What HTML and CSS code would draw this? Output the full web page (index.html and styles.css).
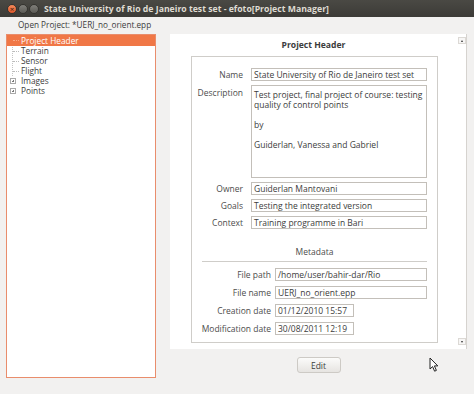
FILE: index.html
```html
<!DOCTYPE html>
<html lang="en">
<head>
<meta charset="UTF-8" />
<title>efoto[Project Manager]</title>
<link rel="stylesheet" href="styles.css">
</head>
<body>
<div class="window">
  <div class="titlebar">
    <span class="wbtn close">&#215;</span>
    <span class="wbtn"></span>
    <span class="wbtn"></span>
    <span class="title">State University of Rio de Janeiro test set - efoto[Project Manager]</span>
  </div>
  <div class="menubar">Open Project: *UERJ_no_orient.epp</div>

  <div class="main">
    <ul class="tree">
      <li class="selected">Project Header</li>
      <li>Terrain</li>
      <li>Sensor</li>
      <li>Flight</li>
      <li class="branch"><span class="expander"></span>Images</li>
      <li class="branch"><span class="expander"></span>Points</li>
    </ul>

    <div class="right">
      <div class="scroll">
        <div class="content">
          <div class="heading">Project Header</div>
          <div class="group">
            <div class="form top">
              <label>Name</label>
              <div class="field">State University of Rio de Janeiro test set</div>
              <label class="top-label">Description</label>
              <div class="field area">Test project, final project of course: testing
quality of control points

by

Guiderlan, Vanessa and Gabriel</div>
              <label>Owner</label>
              <div class="field">Guiderlan Mantovani</div>
              <label>Goals</label>
              <div class="field">Testing the integrated version</div>
              <label>Context</label>
              <div class="field">Training programme in Bari</div>
            </div>

            <div class="subtitle">Metadata</div>

            <div class="form meta">
              <label>File path</label>
              <div class="field">/home/user/bahir-dar/Rio</div>
              <label>File name</label>
              <div class="field">UERJ_no_orient.epp</div>
              <label>Creation date</label>
              <div class="field short">01/12/2010 15:57</div>
              <label>Modification date</label>
              <div class="field short">30/08/2011 12:19</div>
            </div>
          </div>
        </div>
        <div class="vscroll">
          <span class="arrow up"></span>
          <span class="arrow down"></span>
        </div>
      </div>
      <div class="actions">
        <button>Edit</button>
      </div>
    </div>
  </div>

  <svg class="cursor" width="10" height="16" viewBox="0 0 10 16">
    <path d="M1 1 L1 12 L3.6 9.6 L5.6 14.2 L7.4 13.4 L5.4 8.9 L8.8 8.9 Z" fill="#fff" stroke="#222" stroke-width="1" stroke-linejoin="round"/>
  </svg>
</div>
</body>
</html>
```

FILE: styles.css
```css
* { box-sizing: border-box; }
body { margin: 0; font-family: "Open Sans", "DejaVu Sans", sans-serif; font-size: 8.5px; color: #3c3c3c; background: #f2f1f0; }

.window { position: relative; width: 474px; height: 397px; background: #f2f1f0; border-bottom: 3px solid #fff; }

.titlebar { height: 17px; display: flex; align-items: center; padding-left: 7px; background: linear-gradient(#4a4944, #3c3b37); color: #dfdbd2; }
.wbtn { width: 10px; height: 10px; border-radius: 50%; margin-right: 1px; background: linear-gradient(#7f7e79, #5c5b56); border: 1px solid #353430; font-size: 8px; line-height: 8px; text-align: center; color: #3c1a0c; }
.wbtn.close { background: linear-gradient(#f58a5a, #e0572a); }
.title { margin-left: 4px; font-weight: bold; font-size: 8.7px; color: #dfdbd2; white-space: nowrap; }

.menubar { height: 17px; line-height: 16px; padding-left: 18px; font-size: 8.2px; color: #3c3c3c; }

.main { display: flex; padding-left: 6px; gap: 14px; }

.tree { position: relative; list-style: none; margin: 0; padding: 0; width: 150px; height: 344px; background: #fff; border: 1px solid #e98d6c; }
.tree::before { content: ""; position: absolute; left: 5px; top: 10px; height: 31px; border-left: 1px dotted #c4c4c4; }
.tree li { position: relative; height: 10px; line-height: 10px; padding-left: 14px; font-size: 8.3px; color: #3c3c3c; }
.tree li.selected { height: 11px; line-height: 11px; background: #f07746; color: #fff; }
.tree li::before { content: ""; position: absolute; left: 6px; top: 5px; width: 6px; border-top: 1px dotted #bbb; }
.tree li.selected::before { border-top-color: #f7a987; }
.tree li.branch::before { display: none; }
.expander { position: absolute; left: 3px; top: 2px; width: 6px; height: 6px; border: 1px solid #aaa; background: #fff; }
.expander::before { content: ""; position: absolute; left: 1px; top: 1.5px; width: 2px; border-top: 1px solid #777; }
.expander::after { content: ""; position: absolute; left: 1.5px; top: 1px; height: 2px; border-left: 1px solid #777; }

.right { width: 297px; display: flex; flex-direction: column; }
.scroll { height: 315px; display: flex; background: #fff; }
.content { flex: 1; }
.heading { height: 22px; padding-top: 5px; text-align: center; font-weight: bold; font-size: 8.6px; color: #3c3c3c; }
.group { margin: 0 19px 0 21px; height: 287px; border: 1px solid #cfcdc9; padding: 11px 10px 0 10px; }

.form { display: grid; align-items: center; }
.form.top { grid-template-columns: 41px 1fr; column-gap: 8px; row-gap: 4px; }
.form.meta { grid-template-columns: 69px 1fr; column-gap: 4px; row-gap: 5px; }
.form label { justify-self: end; text-align: right; white-space: nowrap; font-size: 8.5px; color: #4c4c4c; }
.form label.top-label { align-self: start; padding-top: 2px; }
.field { height: 13px; line-height: 11px; padding: 0 2px; border: 1px solid #c3bfb9; background: #fff; font-size: 8.5px; color: #3c3c3c; white-space: nowrap; overflow: hidden; }
.field.area { height: 93px; line-height: 9.9px; padding-top: 4px; white-space: pre; }
.field.short { width: 79px; }

.subtitle { margin: 17px 0 6px 0; padding-bottom: 4px; border-bottom: 1px solid #cfcdc9; text-align: center; font-size: 8.5px; color: #4c4c4c; }

.vscroll { position: relative; width: 10px; border-right: 1px solid #d6d3cf; }
.arrow { position: absolute; left: 1px; width: 8px; height: 7px; border: 1px solid #dcd9d5; background: #f7f6f5; }
.arrow.up { top: 3px; }
.arrow.down { bottom: 4px; }
.arrow::after { content: ""; position: absolute; left: 2px; border-left: 1.5px solid transparent; border-right: 1.5px solid transparent; }
.arrow.up::after { top: 2px; border-bottom: 2px solid #333; }
.arrow.down::after { top: 2px; border-top: 2px solid #333; }

.actions { display: flex; justify-content: center; padding-top: 8px; }
button { width: 44px; height: 16px; padding: 0; font-family: inherit; font-size: 8.5px; color: #3c3c3c; border: 1px solid #cdcac5; border-radius: 3px; background: linear-gradient(#fbfbfa, #e6e4e1); }

.cursor { position: absolute; left: 429px; top: 357px; }
```
